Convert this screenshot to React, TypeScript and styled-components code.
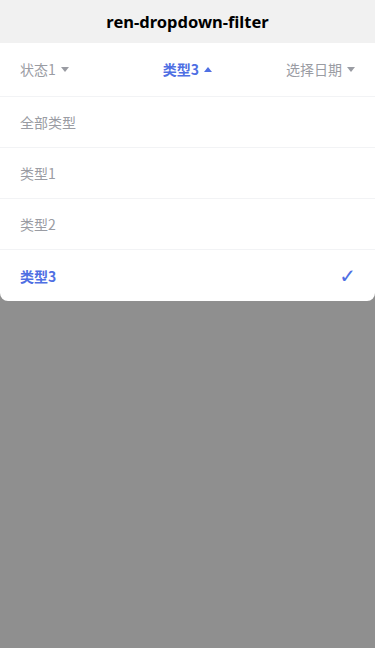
import React from "react";
import styled, { createGlobalStyle } from "styled-components";

const Global = createGlobalStyle`
  html, body { margin: 0; padding: 0; }
  body {
    background: #8f8f8f;
    font-family: "Noto Sans CJK SC", "Noto Sans", sans-serif;
    height: 648px;
    overflow: hidden;
  }
`;

const Page = styled.div`
  display: flex;
  flex-direction: column;
  width: 375px;
  height: 648px;
  background: #8f8f8f;
`;

const TitleBar = styled.div`
  height: 43px;
  background: #f1f1f1;
  display: flex;
  align-items: center;
  justify-content: center;
  font-family: "Noto Sans", "Noto Sans CJK SC", sans-serif;
  font-weight: 700;
  font-size: 16.5px;
  color: #000;
`;

const FilterBar = styled.div`
  height: 54px;
  background: #fff;
  display: grid;
  grid-template-columns: 1fr 1fr 1fr;
  align-items: center;
  padding: 0 20px 1px;
  box-sizing: border-box;
  border-bottom: 1px solid #f2f3f5;
`;

const FilterItem = styled.div<{ $active?: boolean; $align: string }>`
  display: flex;
  align-items: center;
  justify-self: ${(p) => p.$align};
  gap: 5px;
  font-size: 14px;
  color: ${(p) => (p.$active ? "#4f6fe3" : "#9a9ca3")};
  font-weight: ${(p) => (p.$active ? 700 : 400)};
`;

const Caret = styled.span<{ $up?: boolean; $active?: boolean }>`
  width: 0;
  height: 0;
  border-left: 4px solid transparent;
  border-right: 4px solid transparent;
  ${(p) =>
    p.$up
      ? `border-bottom: 5px solid ${p.$active ? "#4f6fe3" : "#9a9ca3"};`
      : `border-top: 5px solid ${p.$active ? "#4f6fe3" : "#9a9ca3"};`}
`;

const Panel = styled.div`
  background: #fff;
  border-radius: 0 0 8px 8px;
  display: flex;
  flex-direction: column;
`;

const Option = styled.div<{ $active?: boolean; $last?: boolean }>`
  height: 51px;
  box-sizing: border-box;
  display: flex;
  align-items: center;
  justify-content: space-between;
  padding: 0 20px;
  font-size: 14px;
  color: ${(p) => (p.$active ? "#4f6fe3" : "#9a9ca3")};
  font-weight: ${(p) => (p.$active ? 700 : 400)};
  border-bottom: ${(p) => (p.$last ? "none" : "1px solid #f2f3f5")};
`;

const Check = styled.span`
  color: #4f6fe3;
  font-size: 20px;
  font-family: "DejaVu Sans", sans-serif;
  margin-right: -1px;
`;

const options = ["全部类型", "类型1", "类型2", "类型3"];

export default function App() {
  return (
    <Page>
      <Global />
      <TitleBar>ren-dropdown-filter</TitleBar>
      <FilterBar>
        <FilterItem $align="start">
          状态1<Caret />
        </FilterItem>
        <FilterItem $align="center" $active>
          类型3<Caret $up $active />
        </FilterItem>
        <FilterItem $align="end">
          选择日期<Caret />
        </FilterItem>
      </FilterBar>
      <Panel>
        {options.map((o, i) => (
          <Option key={o} $active={i === 3} $last={i === 3}>
            {o}
            {i === 3 && <Check>✓</Check>}
          </Option>
        ))}
      </Panel>
    </Page>
  );
}
